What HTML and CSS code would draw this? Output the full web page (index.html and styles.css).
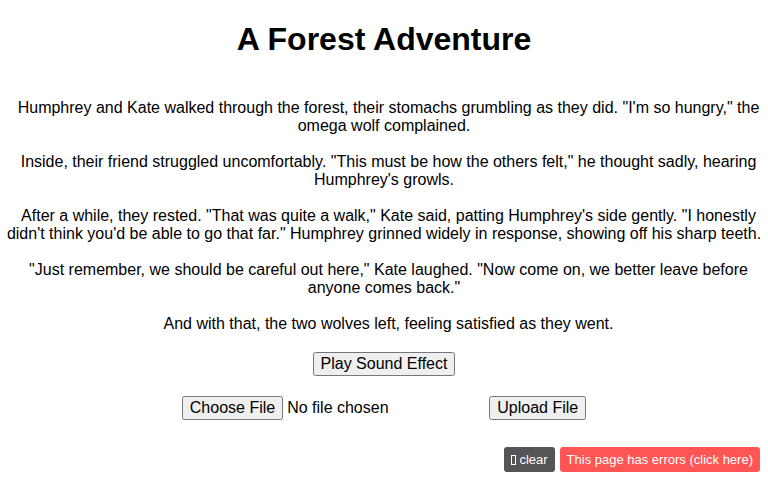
FILE: index.html
```html
<!DOCTYPE html>
<html>
<head>
<meta charset="utf-8">
<title>A Forest Adventure</title>
<link rel="stylesheet" href="styles.css">
</head>
<body>
<h1 class="title">A Forest Adventure</h1>
<div class="story">
<p>Humphrey and Kate walked through the forest, their stomachs grumbling as they did. "I'm so hungry," the omega wolf complained.</p>
<p>Inside, their friend struggled uncomfortably. "This must be how the others felt," he thought sadly, hearing Humphrey's growls.</p>
<p>After a while, they rested. "That was quite a walk," Kate said, patting Humphrey's side gently. "I honestly didn't think you'd be able to go that far." Humphrey grinned widely in response, showing off his sharp teeth.</p>
<p>"Just remember, we should be careful out here," Kate laughed. "Now come on, we better leave before anyone comes back."</p>
<p>And with that, the two wolves left, feeling satisfied as they went.</p>
</div>
<div class="controls">
<button class="btn">Play Sound Effect</button>
</div>
<div class="controls upload">
<input type="file" class="file"> <button class="btn">Upload File</button>
</div>
<div class="errbar">
<button class="err-clear"><span class="tofu"></span> clear</button>
<button class="err-msg">This page has errors (click here)</button>
</div>
</body>
</html>
```
FILE: styles.css
```css
html, body {
  margin: 0;
  padding: 0;
  background: #fff;
}
body {
  font-family: "Liberation Sans", Arial, sans-serif;
  color: #000;
  text-align: center;
}
.title {
  font-size: 32px;
  font-weight: bold;
  margin: 21px 0 0;
}
.story {
  margin-top: 41px;
  padding: 0 6px;
}
.story p {
  font-size: 16px;
  margin: 0 0 18px;
  line-height: 18px;
  text-indent: 9px;
}
.controls {
  margin-top: 19px;
}
.upload {
  margin-top: 20px;
}
.btn, .file {
  font-family: "Liberation Sans", Arial, sans-serif;
  font-size: 16px;
}
.errbar {
  position: fixed;
  right: 8px;
  bottom: 8px;
  display: flex;
  gap: 5px;
}
.errbar button {
  border: none;
  border-radius: 3px;
  color: #fff;
  font-family: "Liberation Sans", Arial, sans-serif;
  font-size: 13px;
  height: 25px;
  padding: 0 7px;
  cursor: pointer;
}
.err-clear {
  background: #555;
  padding: 0 8px;
}
.err-msg {
  background: #f55;
}
.tofu {
  display: inline-block;
  width: 5px;
  height: 10px;
  border: 1px solid #fff;
  vertical-align: -1px;
  box-sizing: border-box;
}
```
